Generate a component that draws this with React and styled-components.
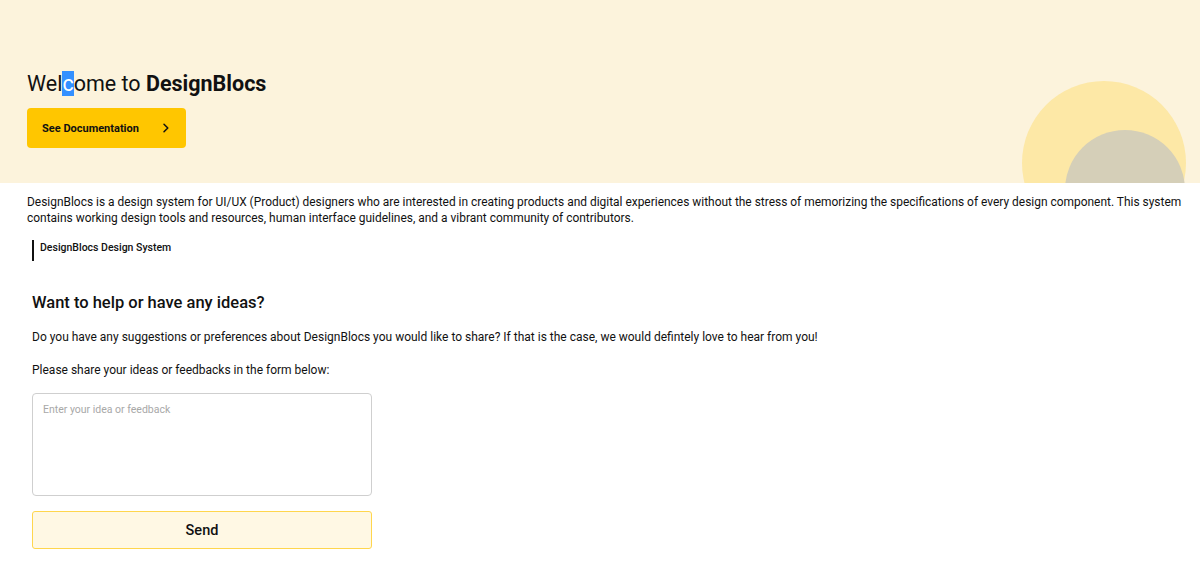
import React from "react";
import styled, { createGlobalStyle } from "styled-components";

const Global = createGlobalStyle`
  html, body { margin: 0; padding: 0; background: #fff; }
  body { font-family: Roboto, "Open Sans", sans-serif; color: #111; }
  * { box-sizing: border-box; }
`;

const Hero = styled.header`
  position: relative;
  height: 183px;
  background: #fcf3dc;
  overflow: hidden;
  padding: 71px 27px 0;
`;

const Title = styled.h1`
  margin: 0;
  font-size: 21.5px;
  font-weight: 400;
  line-height: 26px;
  b { font-weight: 700; }
`;

const Sel = styled.span`
  background: #3390ff;
  color: #fff;
`;

const DocButton = styled.button`
  margin-top: 11px;
  width: 159px;
  height: 40px;
  border: none;
  border-radius: 4px;
  background: #ffc600;
  display: flex;
  align-items: center;
  justify-content: space-between;
  padding: 0 16px 0 15px;
  font-family: inherit;
  font-size: 11px;
  font-weight: 700;
  color: #111;
  cursor: pointer;
`;

const Circle = styled.div`
  position: absolute;
  border-radius: 50%;
  width: ${(p) => p.size}px;
  height: ${(p) => p.size}px;
  left: ${(p) => p.x}px;
  top: ${(p) => p.y}px;
  background: ${(p) => p.color};
`;

const Main = styled.main`
  padding: 11px 12px 0 27px;
`;

const Intro = styled.p`
  margin: 0;
  font-size: 11.95px;
  line-height: 16px;
  color: #111;
`;

const Quote = styled.div`
  margin: 14px 0 0 5px;
  border-left: 2px solid #111;
  padding: 1px 0 6px 6px;
  font-size: 10.5px;
  font-weight: 500;
  line-height: 14px;
  height: 21px;
`;

const Section = styled.section`
  padding: 31px 5px 0;
`;

const H2 = styled.h2`
  margin: 0;
  font-size: 16.5px;
  font-weight: 500;
  line-height: 22px;
`;

const P = styled.p`
  margin: ${(p) => p.mt}px 0 0;
  font-size: 12px;
  line-height: 16px;
`;

const TextArea = styled.textarea`
  display: block;
  margin-top: 15px;
  width: 340px;
  height: 103px;
  border: 1px solid #cfcfcf;
  border-radius: 4px;
  padding: 9px 10px;
  resize: none;
  font-family: inherit;
  font-size: 10.5px;
  &::placeholder { color: #a8a8a8; }
`;

const Send = styled.button`
  display: block;
  margin-top: 15px;
  width: 340px;
  height: 38px;
  background: #fff8e4;
  border: 1px solid #ffd64d;
  border-radius: 3px;
  font-family: inherit;
  font-size: 14.5px;
  font-weight: 500;
  color: #111;
  cursor: pointer;
`;

const Chevron = () => (
  <svg width="8" height="10" viewBox="0 0 8 10" fill="none">
    <path d="M2 1.2 L5.8 5 L2 8.8" stroke="#111" strokeWidth="1.5" strokeLinecap="round" strokeLinejoin="round" />
  </svg>
);

export default function App() {
  return (
    <>
      <Global />
      <Hero>
        <Title>
          Wel<Sel>c</Sel>ome to <b>DesignBlocs</b>
        </Title>
        <DocButton>
          <span>See Documentation</span>
          <Chevron />
        </DocButton>
        <Circle size={164} x={1022} y={81} color="#fde8a6" />
        <Circle size={120} x={1065} y={130} color="#d5cfb8" />
      </Hero>
      <Main>
        <Intro>
          DesignBlocs is a design system for UI/UX (Product) designers who are interested in creating products and digital experiences without the stress of memorizing the specifications of every design component. This system contains working design tools and resources, human interface guidelines, and a vibrant community of contributors.
        </Intro>
        <Quote>DesignBlocs Design System</Quote>
        <Section>
          <H2>Want to help or have any ideas?</H2>
          <P mt={15}>
            Do you have any suggestions or preferences about DesignBlocs you would like to share? If that is the case, we would defintely love to hear from you!
          </P>
          <P mt={17}>Please share your ideas or feedbacks in the form below:</P>
          <TextArea placeholder="Enter your idea or feedback" />
          <Send>Send</Send>
        </Section>
      </Main>
    </>
  );
}
